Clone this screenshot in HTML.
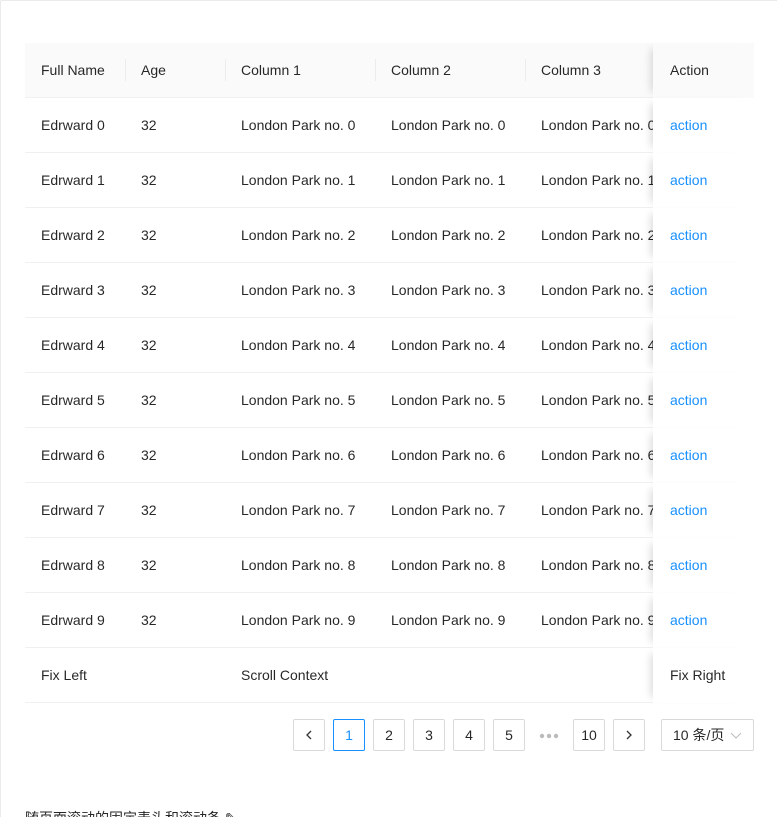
<!DOCTYPE html>
<html style="width:777px;height:817px;overflow:hidden"><head><meta charset="utf-8"><style>
*{box-sizing:border-box;margin:0;padding:0}
body{width:777px;height:817px;overflow:hidden;position:relative;background:#fff;font-family:"Liberation Sans","Noto Sans CJK SC",sans-serif;font-size:14px;color:rgba(0,0,0,.85)}
.frame{position:absolute;left:0;top:0;width:777px;height:817px;border:1px solid #ebebeb;border-right:none;border-bottom:none;border-radius:2px 0 0 0}
.tbl{position:absolute;left:25px;top:43px;width:729px}
.row{position:relative;height:55px;border-bottom:1px solid #f0f0f0}
.row.h{background:#fafafa}
.c{position:absolute;top:0;height:54px;line-height:54px;padding-left:16px;white-space:nowrap;overflow:hidden}
.h .c.s::before{content:"";position:absolute;left:0;top:16px;width:1px;height:22px;background:#ececec}
.fr{position:absolute;left:628px;top:0;width:101px;height:55px;line-height:54px;padding-left:17px;background:#fff;box-shadow:-8px 0 8px -6px rgba(0,0,0,.15)}
.h .fr{background:#fafafa}
a{color:#1890ff;text-decoration:none}
.pg{position:absolute;top:719px;width:32px;height:32px;border:1px solid #d9d9d9;border-radius:2px;text-align:center;line-height:30px;font-size:14px}
.pg.a{border-color:#1890ff;color:#1890ff}
.tw{position:absolute;left:25px;top:800px;width:300px;height:17px;overflow:hidden}
.title{position:absolute;left:0;top:8px;font-size:14px;white-space:nowrap}
</style></head><body>
<div class="frame"></div>
<div class="tbl">
<div class="row h"><div class="c" style="left:0;width:100px">Full Name</div><div class="c s" style="left:100px;width:100px">Age</div><div class="c s" style="left:200px;width:150px">Column 1</div><div class="c s" style="left:350px;width:150px">Column 2</div><div class="c s" style="left:500px;width:128px">Column 3</div><div class="fr">Action</div></div>
<div id="rows"></div>
<div class="row"><div class="c" style="left:0">Fix Left</div><div class="c" style="left:200px">Scroll Context</div><div class="fr">Fix Right</div></div>
</div>
<script>
var h='';for(var i=0;i<10;i++){h+='<div class="row"><div class="c" style="left:0;width:100px">Edrward '+i+'</div><div class="c" style="left:100px;width:100px">32</div><div class="c" style="left:200px;width:150px">London Park no. '+i+'</div><div class="c" style="left:350px;width:150px">London Park no. '+i+'</div><div class="c" style="left:500px;width:128px">London Park no. '+i+'</div><div class="fr"><a>action</a></div></div>';}
document.getElementById('rows').innerHTML=h;
</script>
<div class="pg" style="left:293px"><svg width="10" height="10" viewBox="0 0 10 10" style="margin-top:10px"><path d="M7 1 3 5l4 4" fill="none" stroke="#333" stroke-width="1.3"/></svg></div>
<div class="pg a" style="left:333px">1</div>
<div class="pg" style="left:373px">2</div>
<div class="pg" style="left:413px">3</div>
<div class="pg" style="left:453px">4</div>
<div class="pg" style="left:493px">5</div>
<div class="pg" style="left:533px;border:none"><svg width="20" height="6" viewBox="0 0 20 6" style="margin-top:13px"><circle cx="3" cy="3" r="2.2" fill="#bbb"/><circle cx="10" cy="3" r="2.2" fill="#bbb"/><circle cx="17" cy="3" r="2.2" fill="#bbb"/></svg></div>
<div class="pg" style="left:573px">10</div>
<div class="pg" style="left:613px"><svg width="10" height="10" viewBox="0 0 10 10" style="margin-top:10px"><path d="M3 1l4 4-4 4" fill="none" stroke="#333" stroke-width="1.3"/></svg></div>
<div class="pg" style="left:661px;width:93px;text-align:left;padding-left:11px">10 条/页<svg width="12" height="8" viewBox="0 0 12 8" style="position:absolute;right:11px;top:12px"><path d="M1 1l5 5 5-5" fill="none" stroke="#bbb" stroke-width="1"/></svg></div>
<div class="tw"><div class="title">随页面滚动的固定表头和滚动条 ✎</div></div>
</body></html>
